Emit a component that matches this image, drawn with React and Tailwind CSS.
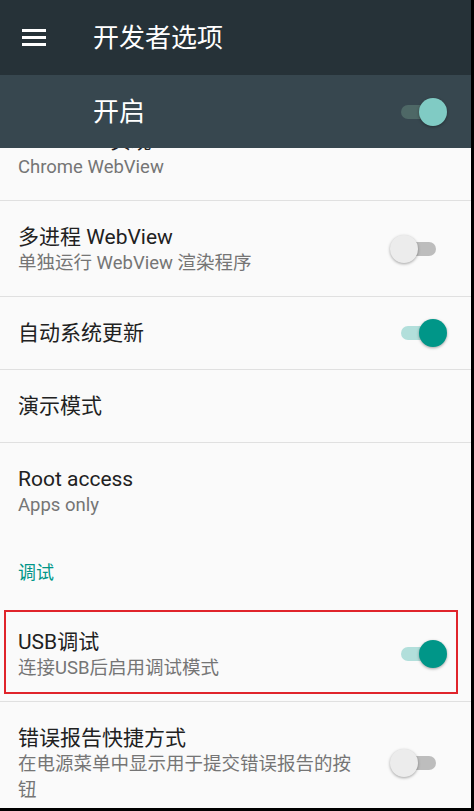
import React from "react";

const FONT = { fontFamily: 'Roboto, "Noto Sans CJK SC", "Noto Sans", sans-serif' };

function Switch({ on, dark }) {
  const track = dark ? "bg-[#4e6866]" : on ? "bg-[#b2dfdb]" : "bg-[#bdbdbd]";
  const thumb = dark ? "bg-[#80cbc4]" : on ? "bg-[#009688]" : "bg-[#ececec]";
  return (
    <div className="relative w-[57px] h-[28px] shrink-0">
      <div className={`absolute left-[11px] right-[11px] top-[7px] h-[14px] rounded-full ${track}`} />
      <div
        className={`absolute top-0 w-[28px] h-[28px] rounded-full shadow-[0_1px_3px_rgba(0,0,0,0.35)] ${thumb} ${on ? "right-0" : "left-0"}`}
      />
    </div>
  );
}

function Row({ title, sub, toggle, divider = true, children }) {
  return (
    <div className={`relative flex items-center pl-[18px] pr-[24px] ${divider ? "border-b border-[#e0e0e0]" : ""}`}>
      <div className={`w-[340px] pt-[23px] ${sub ? "pb-[20px]" : "pb-[23px]"}`}>
        <div className="text-[21px] leading-[26px] text-[#212121]">{title}</div>
        {sub && <div className="text-[18.5px] leading-[26px] text-[#757575]">{sub}</div>}
      </div>
      <div className="flex-1" />
      {toggle !== undefined && <Switch on={toggle} />}
      {children}
    </div>
  );
}

export default function App() {
  return (
    <div className="w-[474px] h-[811px] bg-black" style={FONT}>
      <div className="w-[471px] h-[808px] overflow-hidden bg-[#fafafa]">
        <div className="relative z-10">
          <div className="h-[75px] bg-[#263238] flex items-center">
            <div className="ml-[22px] w-[24px] flex flex-col gap-[4px]">
              <div className="h-[3px] bg-white" />
              <div className="h-[3px] bg-white" />
              <div className="h-[3px] bg-white" />
            </div>
            <div className="ml-[47px] text-[26px] text-white leading-none">开发者选项</div>
          </div>
          <div className="h-[73px] bg-[#37474f] flex items-center pr-[24px]">
            <div className="ml-[93px] text-[26px] text-white leading-none">开启</div>
            <div className="flex-1" />
            <Switch on dark />
          </div>
        </div>
        <div className="-mt-[43px]">
          <Row title="WebView 实现" sub="Chrome WebView" />
          <Row title="多进程 WebView" sub="单独运行 WebView 渲染程序" toggle={false} />
          <Row title="自动系统更新" toggle={true} />
          <Row title="演示模式" />
          <Row title="Root access" sub="Apps only" divider={false} />
          <div className="h-[68px] flex items-center pl-[18px] text-[18px] text-[#009688]">调试</div>
          <Row title="USB调试" sub="连接USB后启用调试模式" toggle={true}>
            <div className="absolute left-[4px] right-[13px] top-[4px] bottom-[7px] border-2 border-[#e0242b] pointer-events-none" />
          </Row>
          <Row title="错误报告快捷方式" sub="在电源菜单中显示用于提交错误报告的按钮" toggle={false} divider={false} />
        </div>
      </div>
    </div>
  );
}
